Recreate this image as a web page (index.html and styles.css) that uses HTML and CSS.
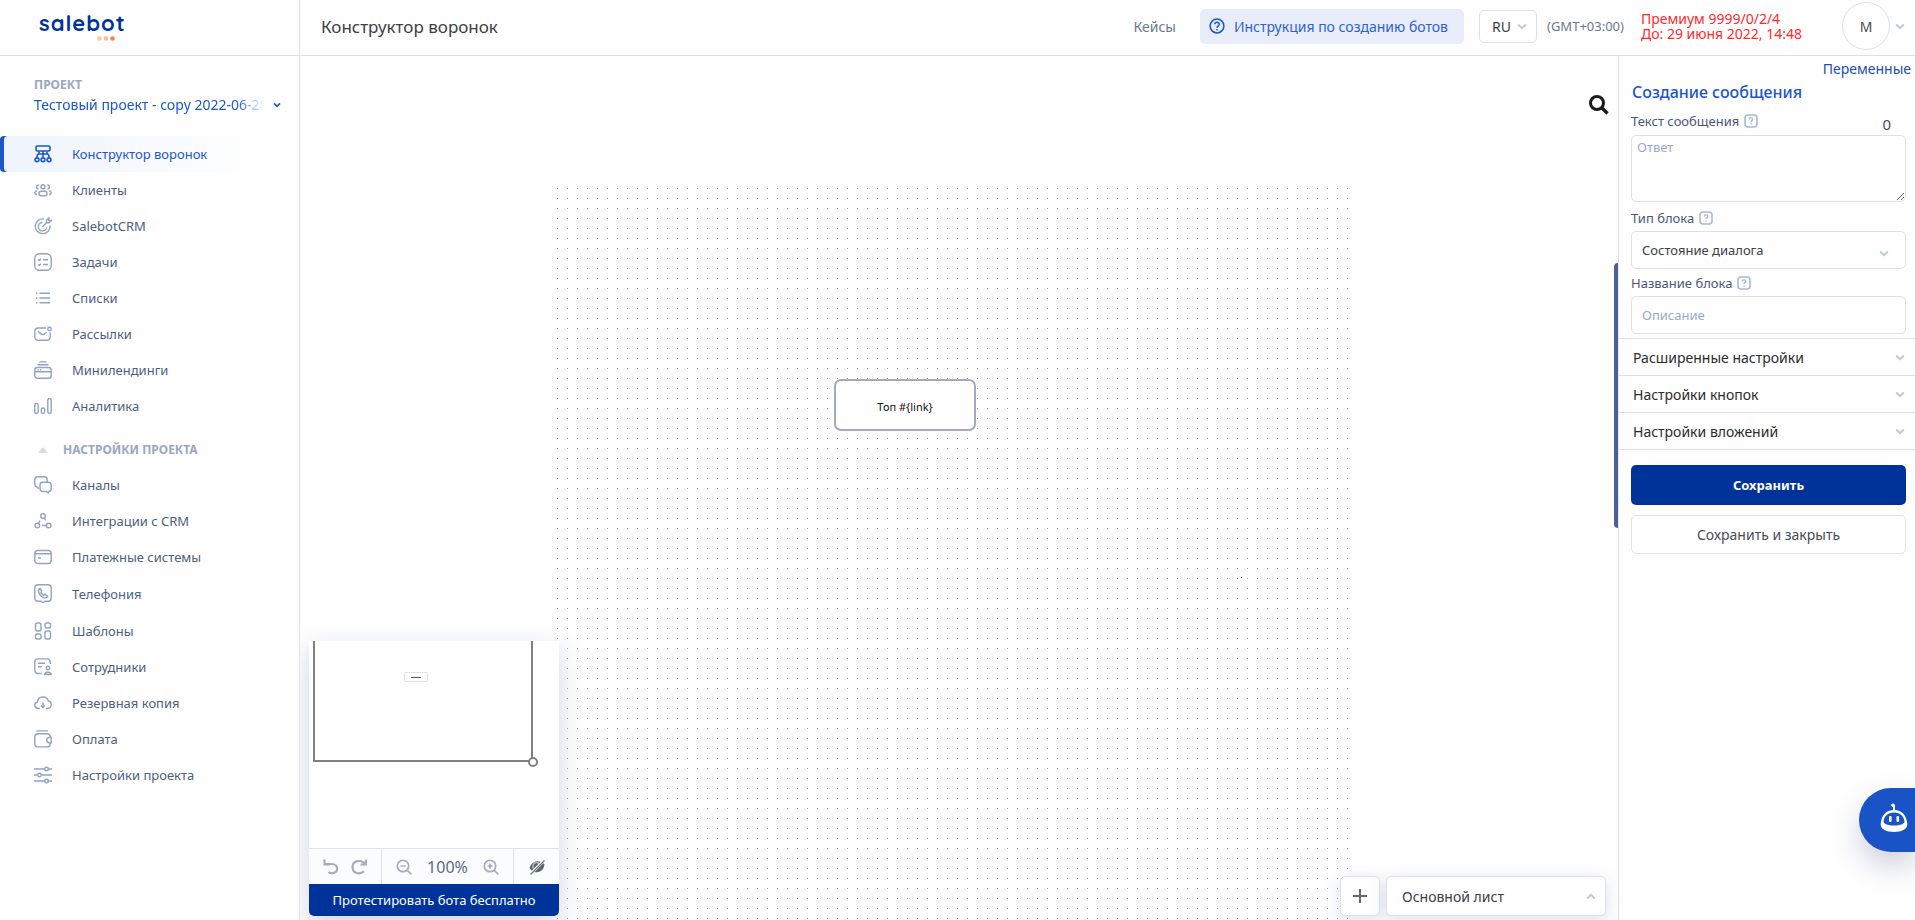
FILE: index.html
```html
<!DOCTYPE html>
<html lang="ru">
<head>
<meta charset="utf-8">
<title>Конструктор воронок</title>
<link rel="stylesheet" href="styles.css">
</head>
<body>
<svg class="defs" aria-hidden="true">
  <symbol id="chev" viewBox="0 0 10 7"><path d="M1.2 1.5 5 5.2 8.8 1.5" fill="none" stroke="currentColor" stroke-width="2"/></symbol>
  <symbol id="help" viewBox="0 0 14 14"><rect x="1" y="1" width="12" height="12" rx="3" fill="none" stroke="currentColor" stroke-width="1.6"/><path d="M5.300 5.500c0-2.200 3.400-2.100 3.400-.1C8.700 6.600 7 6.700 7 8.100M7 9.300v1.200" fill="none" stroke="currentColor" stroke-width="1.400"/></symbol>
</svg>
<div class="app">
  <aside class="sidebar">
    <a class="logo" href="#" aria-label="salebot"><span class="logo-text">salebot</span>
      <svg class="logo-dots" width="18" height="5" viewBox="0 0 18 5"><circle cx="2.500" cy="2.500" r="2.300" fill="#ffc4ab"/><circle cx="9" cy="2.500" r="2.300" fill="#ffb598"/><circle cx="15.500" cy="2.500" r="2.300" fill="#f5824d"/></svg>
    </a>
    <div class="project">
      <span class="caption">ПРОЕКТ</span>
      <button class="project-btn" type="button"><span class="project-name">Тестовый проект - copy 2022-06-28</span>
        <svg width="8" height="6"><use href="#chev"/></svg></button>
    </div>
    <nav class="menu">
      <a class="item active" href="#"><svg width="18" height="18" viewBox="0 0 18 18"><rect x="2" y="1" width="14" height="5" rx="1.500"/><path d="M9 6v6M5 6.500v2.500M13 6.500v2.500M3 12c0-2 .5-3 2-3h8c1.500 0 2 1 2 3"/><circle cx="3" cy="14.800" r="1.900"/><circle cx="9" cy="14.800" r="1.900"/><circle cx="15" cy="14.800" r="1.900"/></svg>Конструктор воронок</a>
      <a class="item" href="#"><svg width="18" height="18" viewBox="0 0 18 18"><circle cx="9" cy="5.800" r="2"/><rect x="5" y="10.300" width="8" height="4.500" rx="2.200"/><path d="M4.800 4H4.500a1.800 1.800 0 0 0 0 3.800M13.200 4h.3a1.800 1.800 0 0 1 0 3.800M3 13.500C0 13.300.2 10.200 3 10M15 13.500c3-.2 2.800-3.300 0-3.500"/></svg>Клиенты</a>
      <a class="item" href="#"><svg width="18" height="18" viewBox="0 0 18 18"><path d="M10 2a7.400 7.400 0 1 0 6 6.500M8.500 5.500a4.200 4.200 0 1 0 4.200 4.800M8.500 9.700 13 5.200M12.500 5.500v-2.500L14.800 1v2.300l2.500.2-2.300 2.200z"/></svg>SalebotCRM</a>
      <a class="item" href="#"><svg width="18" height="18" viewBox="0 0 18 18"><rect x=".8" y=".8" width="16.400" height="16.400" rx="4.500"/><path d="m4 6.500 1.200 1L7 5.800m-3 5.700 1.200 1L7 10.800M9 6.800h5M9 11.500h5"/></svg>Задачи</a>
      <a class="item" href="#"><svg width="18" height="18" viewBox="0 0 18 18"><path d="M5.500 4.200H16M5.500 9H16M5.500 13.800H16M2 4.200h1.400M2 9h1.400M2 13.800h1.400"/></svg>Списки</a>
      <a class="item" href="#"><svg width="18" height="18" viewBox="0 0 18 18"><path d="M12 3H4.500C2 3 .8 4 .8 6.500v5.200c0 2.500 1.200 3.500 3.700 3.500h8c2.500 0 3.700-1 3.700-3.500V7.500M4 6.500c2.500 2 3.500 3 4.800 3s2-1 3.700-2.300"/><circle cx="15.500" cy="4" r="1.700"/></svg>Рассылки</a>
      <a class="item" href="#"><svg width="18" height="18" viewBox="0 0 18 18"><rect x=".8" y="6.500" width="16.400" height="10.700" rx="2.500"/><path d="M5.500.9h7M3.500 3.800h11M1 10.800h16M3.500 8.700h1.200M6 8.700h1.200"/></svg>Минилендинги</a>
      <a class="item" href="#"><svg width="18" height="18" viewBox="0 0 18 18"><rect x=".8" y="6.500" width="3.400" height="10" rx="1.700"/><rect x="7.300" y="11" width="3.400" height="5.500" rx="1.700"/><rect x="13.800" y="1.500" width="3.400" height="15" rx="1.700"/></svg>Аналитика</a>
      <button class="group" type="button"><svg width="10" height="6" viewBox="0 0 10 6"><path d="M0 6 4 1q1-1 2 0l4 5z" fill="#d9dce8"/></svg>НАСТРОЙКИ ПРОЕКТА</button>
      <a class="item" href="#"><svg width="18" height="18" viewBox="0 0 18 18"><path d="M4.500 13 3.800 11.500C1.800 11 .8 10 .8 8V4C.8 1.800 1.900.8 4 .8h6c2.200 0 3.200 1 3.200 3v2.500"/><path d="M9 6.300h5.200c2 0 3 1 3 3v3.200c0 2-1 3-2.400 3l-.8 1.500-1.500-1.500H9c-2 0-3-1-3-3V9.300c0-2 1-3 3-3z"/></svg>Каналы</a>
      <a class="item" href="#"><svg width="18" height="18" viewBox="0 0 18 18"><circle cx="9" cy="4" r="2.300"/><circle cx="3.300" cy="13.500" r="2.300"/><circle cx="14.700" cy="13.500" r="2.300"/><path d="m10.300 6 1.400 2.300M4.500 11.500 6 8.700M8 13.500h4.200"/></svg>Интеграции с CRM</a>
      <a class="item" href="#"><svg width="18" height="18" viewBox="0 0 18 18"><rect x=".8" y="2.500" width="16.400" height="13" rx="3"/><path d="M1 5.800h16M4 10h3"/></svg>Платежные системы</a>
      <a class="item" href="#"><svg width="18" height="20" viewBox="0 0 18 20"><path d="M4 .8h10c2.200 0 3.200 1 3.200 3.200v10c0 2.200-1 3.200-3.200 3.200h-3L9 18.700l-2-1.500H4c-2.200 0-3.200-1-3.200-3.200V4C.8 1.800 1.800.8 4 .8z"/><path d="m6 4.500 1.800 2.600-.9 1.300c.7 1.400 1.500 2.200 2.800 2.900l1.400-.9 2.500 1.800c-.7 2-2.700 2.100-4.600 1.100C6.700 12.200 5.300 10.500 4.600 8c-.3-1.500.2-2.900 1.400-3.500z"/></svg>Телефония</a>
      <a class="item" href="#"><svg width="18" height="18" viewBox="0 0 18 18"><rect x="1.500" y="1" width="5.500" height="8" rx="1.800"/><rect x="11" y="1" width="5.500" height="5" rx="1.800"/><rect x="1.500" y="12" width="5.500" height="5" rx="1.800"/><rect x="11" y="9" width="5.500" height="8" rx="1.800"/></svg>Шаблоны</a>
      <a class="item" href="#"><svg width="18" height="18" viewBox="0 0 18 18"><path d="M7.500 15.500H4c-2 0-3.200-1-3.200-3.200V4C.8 2 2 .9 4 .9h9c2 0 3.200 1.100 3.200 3.100v2M4 5.300h7M4 8.800h4"/><circle cx="14" cy="10" r="1.700"/><path d="M10.700 16.500c0-3 6.500-3 6.500 0z"/></svg>Сотрудники</a>
      <a class="item" href="#"><svg width="18" height="18" viewBox="0 0 18 18"><path d="M6 14.500H4.500C-.2 14.200-.3 8.500 3.500 8c.5-6.500 9.500-6.500 10.800-1 4.300.7 3.800 7.200-.8 7.500H12M9 8.500v4.800M7 11.500l2 2 2-2"/></svg>Резервная копия</a>
      <a class="item" href="#"><svg width="18" height="18" viewBox="0 0 18 18"><path d="M16.200 7.500V6.700c0-2-1-3-3.200-3H4c-2.200 0-3.200 1-3.200 3.200v6.800c0 2.200 1 3.200 3.200 3.200h9c2.200 0 3.200-1 3.200-3v-.8M2.500.9h11.500M17.200 7.500h-2.500c-2.700.5-2.700 4.700 0 5.200h2.500z"/></svg>Оплата</a>
      <a class="item" href="#"><svg width="18" height="18" viewBox="0 0 18 18"><path d="M0 3h10M15 3h3M0 9h3M8 9h10M0 15h10M15 15h3"/><circle cx="12.500" cy="3" r="1.800"/><circle cx="5.500" cy="9" r="1.800"/><circle cx="12.500" cy="15" r="1.800"/></svg>Настройки проекта</a>
    </nav>
  </aside>

  <div class="main">
    <header class="topbar">
      <h1>Конструктор воронок</h1>
      <a class="cases" href="#">Кейсы</a>
      <a class="guide" href="#"><svg width="16" height="16" viewBox="0 0 16 16"><circle cx="8" cy="8" r="6.900" fill="none" stroke="currentColor" stroke-width="1.500"/><path d="M5.800 6.300c.2-2.700 4.600-2.600 4.500 0C10.200 7.800 8 8 8 10M8 10.900v1.500" fill="none" stroke="currentColor" stroke-width="1.500"/></svg>Инструкция по созданию ботов</a>
      <div class="select lang"><select aria-label="Язык"><option>RU</option><option>EN</option></select><svg width="10" height="7"><use href="#chev"/></svg></div>
      <span class="tz">(GMT+03:00)</span>
      <p class="plan">Премиум 9999/0/2/4<br>До: 29 июня 2022, 14:48</p>
      <button class="user" type="button"><span class="avatar">M</span><svg width="10" height="7"><use href="#chev"/></svg></button>
    </header>

    <div class="work">
      <main class="canvas">
        <div class="grid"></div>
        <div class="stray"></div>
        <div class="node">Топ #{link}</div>
        <button class="search" type="button" aria-label="Поиск"><svg width="20" height="20" viewBox="0 0 20 20"><circle cx="8" cy="8" r="6.500" fill="none" stroke="#1b1b1b" stroke-width="3"/><path d="m12.500 12.500 6 6" stroke="#1b1b1b" stroke-width="3.400"/></svg></button>
        <section class="widget">
          <div class="map"><div class="frame"></div><div class="handle"></div><div class="mini"><i></i></div></div>
          <div class="tools">
            <div class="tool-group history">
              <button type="button" aria-label="Отменить"><svg width="16" height="16" viewBox="0 0 16 16"><path d="M1.500.5v5H7M2 5h6.500c7.500 0 7.500 9.300.5 9.300-1.500 0-2.500-.3-3.500-1.300"/></svg></button>
              <button type="button" aria-label="Повторить"><svg width="16" height="16" viewBox="0 0 16 16"><path d="M15 .5v5H9.500M14 5.500C11.500.3 1.500.8 1.500 8c0 6.500 7.500 8 11.500 4.300"/></svg></button>
            </div>
            <div class="tool-group zoom">
              <button type="button" aria-label="Уменьшить"><svg width="16" height="16" viewBox="0 0 16 16"><circle cx="7" cy="7" r="5.700"/><path d="m11.300 11.300 4 4M4.500 7h5"/></svg></button>
              <span>100%</span>
              <button type="button" aria-label="Увеличить"><svg width="16" height="16" viewBox="0 0 16 16"><circle cx="7" cy="7" r="5.700"/><path d="m11.300 11.300 4 4M4.500 7h5M7 4.500v5"/></svg></button>
            </div>
            <div class="tool-group eye">
              <button type="button" aria-label="Скрыть карту"><svg width="16" height="16" viewBox="0 0 16 16"><path d="M.5 9C2.500 1.500 11 0 15.500 5.500 14.500 14 5 16 .5 9z" fill="#5f6670" stroke="none"/><path d="M5 9.500a3.500 3.500 0 0 1 5-5" stroke="#aab0b8"/><path d="M1 15.500 15.500 1" stroke="#fff" stroke-width="3"/><path d="M1.500 15.500 15.500 1.500" stroke="#68707c" stroke-width="1.300"/></svg></button>
            </div>
          </div>
          <button class="test" type="button">Протестировать бота бесплатно</button>
        </section>
        <div class="sheets">
          <button class="add" type="button" aria-label="Добавить лист"><svg width="14" height="14" viewBox="0 0 14 14"><path d="M7 0v14M0 7h14" stroke="#5d6a80" stroke-width="2"/></svg></button>
          <div class="select sheet"><select aria-label="Лист"><option>Основной лист</option></select><svg class="up" width="10" height="7"><use href="#chev"/></svg></div>
        </div>
        <div class="grip"></div>
      </main>

      <form class="panel">
        <a class="vars" href="#">Переменные</a>
        <h2>Создание сообщения</h2>
        <div class="label-row first"><label for="msg">Текст сообщения</label><svg width="14" height="14"><use href="#help"/></svg><output>0</output></div>
        <textarea id="msg" placeholder="Ответ"></textarea>
        <div class="label-row"><label for="type">Тип блока</label><svg width="14" height="14"><use href="#help"/></svg></div>
        <div class="select type"><select id="type"><option>Состояние диалога</option></select><svg width="10" height="7"><use href="#chev"/></svg></div>
        <div class="label-row"><label for="name">Название блока</label><svg width="14" height="14"><use href="#help"/></svg></div>
        <input id="name" type="text" placeholder="Описание">
        <div class="folds">
          <button type="button">Расширенные настройки<svg width="10" height="7"><use href="#chev"/></svg></button>
          <button type="button">Настройки кнопок<svg width="10" height="7"><use href="#chev"/></svg></button>
          <button type="button">Настройки вложений<svg width="10" height="7"><use href="#chev"/></svg></button>
        </div>
        <button class="save" type="button">Сохранить</button>
        <button class="save-close" type="button">Сохранить и закрыть</button>
      </form>
    </div>
  </div>
</div>
<button class="bot" type="button" aria-label="Помощник"><svg width="28" height="30" viewBox="0 0 28 30"><path d="M14 8V2" stroke="#fff" stroke-width="2"/><circle cx="13" cy="2.300" r="1.800" fill="#fff"/><path fill="#fff" fill-rule="evenodd" d="M14 7c8 0 12 5 13 12 2 7-5 10-13 10S-1 26 1 19C2 12 6 7 14 7zm0 2.500C8 9.500 4.500 13 3.500 18c-.3 3 4 4.500 10.500 4.500S24.800 21 24.500 18C23.500 13 20 9.500 14 9.500z"/><rect x="9" y="13" width="2.600" height="6" rx="1.300" fill="#fff"/><rect x="16.500" y="13" width="2.600" height="6" rx="1.300" fill="#fff"/></svg></button>
</body>
</html>
```
FILE: styles.css
```css
* { box-sizing: border-box; }

body {
  margin: 0;
  background: #fefefe;
  color: #3c4043;
  font-family: "Noto Sans", "Open Sans", sans-serif;
  font-size: 14px;
}

button, input, select, textarea { font: inherit; color: inherit; }
button { border: 0; padding: 0; background: none; cursor: pointer; }
a { color: inherit; text-decoration: none; }
h1, h2, p { margin: 0; }
svg { flex: none; display: block; }
.defs { position: absolute; width: 0; height: 0; }

.app { display: flex; height: 100vh; overflow: hidden; }

/* Sidebar */
.sidebar { flex: none; width: 300px; border-right: 1px solid #dfe1e4; }
.logo { display: flex; flex-direction: column; height: 56px; padding: 11px 0 0 39px; border-bottom: 1px solid #dfe1e4; }
.logo-text { font: 700 22px/25px Quicksand, Nunito, Lato, sans-serif; color: #003399; }
.logo-text { letter-spacing: 1px; }
.logo-dots { margin-left: 58px; }
.project { padding: 20px 18px 21px 34px; }
.caption { display: block; font-size: 12px; font-weight: 700; line-height: 18px; color: #9aa7bd; }
.project-btn { display: flex; align-items: center; justify-content: space-between; width: 100%; line-height: 21px; font-size: 14px; color: #1c56c9; text-align: left; }
.project-name { width: 230px; overflow: hidden; white-space: nowrap; -webkit-mask-image: linear-gradient(90deg, #000 88%, transparent); mask-image: linear-gradient(90deg, #000 88%, transparent); }

.item { display: flex; align-items: center; gap: 20px; padding: 9px 34px; line-height: 18px; font-size: 13px; color: #4e5f7e; }
.item svg { fill: none; stroke: #93a3c0; stroke-width: 1.4; }
.item.active { color: #1c56c9; background: linear-gradient(90deg, #eef3fd, #fefefe 85%); box-shadow: inset 4px 0 #1c56c9; border-radius: 4px; }
.item.active svg { stroke: #1c56c9; stroke-width: 1.6; }
.group { display: flex; align-items: center; gap: 15px; padding: 17px 38px 8px; line-height: 18px; font-size: 12px; font-weight: 700; color: #9aa7bd; }

/* Top bar */
.main { flex: 1; min-width: 0; display: flex; flex-direction: column; }
.topbar { flex: none; display: flex; align-items: center; height: 56px; padding: 0 10px 3px 21px; border-bottom: 1px solid #dfe1e4; white-space: nowrap; }
.topbar h1 { flex: 1; font-size: 17px; font-weight: 400; }
.cases { color: #6b7a90; margin-right: 24px; }
.guide { display: flex; align-items: center; justify-content: space-between; width: 264px; height: 35px; padding: 0 16px 0 9px; border-radius: 5px; background: #e8edf9; color: #2f62cc; }
.guide svg { color: #1c56c9; }
.select { display: flex; align-items: center; border: 1px solid #dfe1e4; border-radius: 5px; position: relative; background: #fefefe; }
.select select { appearance: none; width: 100%; height: 100%; border: 0; background: none; outline: 0; }
.select svg { position: absolute; right: 9px; color: #c3c9d4; pointer-events: none; }
.lang { width: 58px; height: 33px; margin: 0 10px 0 15px; }
.lang select { padding-left: 12px; }
.tz { width: 94px; font-size: 13px; color: #6b7a90; }
.plan { width: 201px; font-size: 14px; line-height: 15px; color: #ff2a2a; }
.user { display: flex; align-items: center; gap: 5px; color: #c3c9d4; }
.user .avatar { display: grid; place-items: center; width: 48px; height: 48px; border: 1px solid #dfe1e4; border-radius: 50%; color: #4a4d52; }

/* Canvas */
.work { flex: 1; min-height: 0; display: flex; }
.canvas { flex: 1; min-width: 0; position: relative; overflow: hidden; }
.grid { position: absolute; left: 257px; top: 132px; bottom: 0; width: 791px; background: radial-gradient(circle at 0 0, #999 0 1px, transparent 1px) 0 0 / 10px 10px; }
.stray { position: absolute; left: 941px; top: 521px; width: 1px; height: 1px; background: #222; }
.node { position: absolute; left: 534px; top: 323px; display: grid; place-items: center; width: 142px; height: 52px; padding-top: 3px; border: 2px solid #a3abbb; border-radius: 7px; background: #fefefe; font-size: 11px; color: #111; }
.search { position: absolute; right: 9px; top: 39px; }
.grip { position: absolute; right: 0; top: 207px; width: 4px; height: 265px; border-radius: 4px 0 0 4px; background: #4a6290; }

.widget { position: absolute; left: 9px; bottom: 4px; width: 250px; border-radius: 0 0 5px 5px; background: #fefefe; box-shadow: 0 8px 24px rgba(80, 95, 140, .25); }
.map { position: relative; height: 207px; overflow: hidden; }
.frame { position: absolute; left: 4px; top: -2px; width: 220px; height: 123px; border: 2px solid #808080; }
.handle { position: absolute; left: 219px; top: 116px; width: 10px; height: 10px; border: 2px solid #808080; border-radius: 50%; background: #fefefe; }
.mini { position: absolute; left: 95px; top: 31px; display: grid; place-items: center; width: 24px; height: 10px; border: 1px solid #dfe1e4; border-radius: 2px; }
.mini i { width: 10px; height: 1px; background: #555a77; }
.tools { display: flex; height: 36px; border-top: 1px solid #dfe1e4; background: #fbfcfe; }
.tool-group { display: flex; align-items: center; justify-content: center; }
.tool-group + .tool-group { border-left: 1px solid #dfe1e4; }
.tool-group svg { fill: none; stroke: #a4adb9; stroke-width: 1.7; }
.history { width: 72px; gap: 12px; }
.history svg { stroke-width: 2.2; }
.zoom { width: 132px; gap: 15px; font-size: 16px; color: #5d6a80; }
.eye { flex: 1; }
.test { display: block; width: 100%; height: 32px; border-radius: 0 0 5px 5px; background: #003399; color: #fff; font-size: 13px; }

.sheets { position: absolute; right: 12px; bottom: 4px; display: flex; gap: 6px; }
.sheets > * { height: 40px; box-shadow: 0 4px 16px rgba(80, 95, 140, .18); }
.add { display: grid; place-items: center; width: 40px; border: 1px solid #dfe1e4; border-radius: 5px; background: #fefefe; }
.sheet { width: 220px; }
.sheet select { padding-left: 15px; }
.sheet .up { transform: rotate(180deg); }

/* Message panel */
.panel { flex: none; display: flex; flex-direction: column; width: 297px; padding: 0 9px 0 12px; border-left: 1px solid #dfe1e4; background: #fefefe; }
.vars { align-self: flex-end; margin-right: -5px; line-height: 26px; color: #1c4fb5; }
.panel h2 { font-size: 16px; font-weight: 500; line-height: 20px; color: #1c56c9; padding-left: 1px; margin-bottom: 9px; }
.label-row { display: flex; align-items: center; gap: 5px; height: 20px; margin: 4px 0 3px; font-size: 13px; color: #4a5876; }
.label-row.first { margin: 0 0 4px; }
.label-row svg { color: #a9b9d9; }
.label-row output { margin: 6px 15px 0 auto; font-size: 15px; color: #4a4d52; }
.panel textarea { height: 67px; margin-bottom: 2px; padding: 2px 5px; border: 1px solid #dfe1e4; border-radius: 5px; background: none; font-size: 13px; resize: vertical; outline: 0; }
.panel input, .type { height: 38px; border: 1px solid #dfe1e4; border-radius: 5px; background: none; font-size: 13px; }
.panel input { padding: 0 10px; outline: 0; }
.panel ::placeholder { color: #9aabca; }
.type select { padding-left: 10px; }
.type svg { right: 16px; top: 18px; }
.folds { margin: 4px -9px 15px -12px; border-top: 1px solid #dfe1e4; }
.folds button { display: flex; align-items: center; justify-content: space-between; width: 100%; height: 37px; padding: 0 10px 0 14px; border-bottom: 1px solid #dfe1e4; color: #2a2c30; }
.folds svg { color: #c3c9d4; }
.save { height: 40px; margin-bottom: 10px; border-radius: 5px; background: #003399; color: #fff; font-weight: 700; font-size: 13px; }
.save-close { height: 39px; border: 1px solid #dfe5ee; border-radius: 5px; color: #4a4d52; }

.bot { position: fixed; right: 0; bottom: 68px; display: flex; align-items: center; width: 56px; height: 64px; padding: 0 0 4px 21px; border-radius: 32px 0 0 32px; background: #1a53c6; box-shadow: 0 14px 28px rgba(70, 85, 130, .25); }
```
